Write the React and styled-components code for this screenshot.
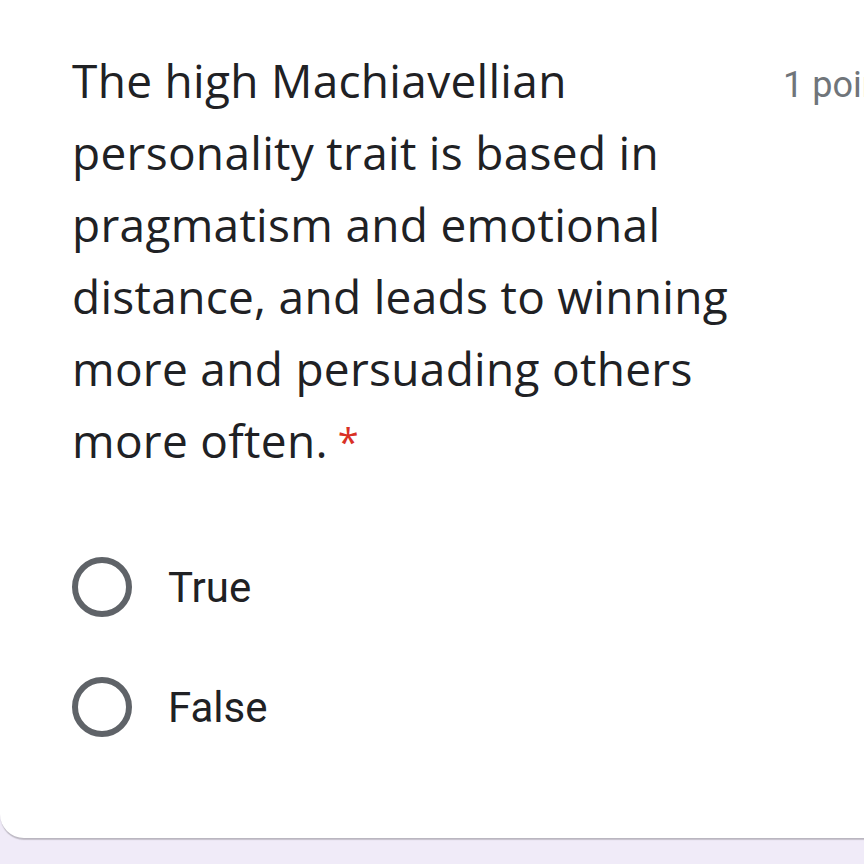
import styled, { createGlobalStyle } from 'styled-components'

const GlobalStyle = createGlobalStyle`
    html, body {
        margin: 0;
        padding: 0;
        background-color: #f0ebf8;
        overflow: hidden;
    }
`

const Page = styled.div`
    width: 864px;
    height: 864px;
    overflow: hidden;
`

const Card = styled.section`
    width: 1100px;
    margin-top: -40px;
    background-color: #ffffff;
    border-radius: 0 0 24px 24px;
    box-shadow: 0 3px 1px -1px rgba(0, 0, 0, 0.16), 0 1px 2px rgba(0, 0, 0, 0.1);
    padding: 84px 0 101px 72px;
    box-sizing: border-box;
`

const Header = styled.div`
    display: flex;
    align-items: flex-start;
`

const Title = styled.h2`
    width: 700px;
    margin: 0;
    font-family: 'Open Sans', 'Lato', sans-serif;
    font-weight: 400;
    font-size: 46px;
    line-height: 72px;
    letter-spacing: 0.3px;
    color: #202124;
`

const Required = styled.span`
    color: #d93025;
    padding-left: 10px;
    font-size: 38px;
    vertical-align: 2px;
`

const Points = styled.div`
    margin-left: 11px;
    padding-top: 5px;
    font-family: Roboto, sans-serif;
    font-size: 36px;
    line-height: 72px;
    color: #70757a;
    white-space: nowrap;
`

const Options = styled.div`
    display: flex;
    flex-direction: column;
    gap: 60px;
    margin-top: 80px;
`

const Option = styled.label`
    display: flex;
    align-items: center;
    gap: 36px;
    font-family: Roboto, sans-serif;
    font-size: 42px;
    color: #202124;
`

const Radio = styled.span`
    width: 60px;
    height: 60px;
    border: 6px solid #5f6368;
    border-radius: 50%;
    box-sizing: border-box;
    flex: none;
`

export default function App() {
    const choices = ['True', 'False']
    return (
        <Page>
            <GlobalStyle />
            <Card>
                <Header>
                    <Title>
                        The high Machiavellian personality trait is based in
                        pragmatism and emotional distance, and leads to winning
                        more and persuading others more often.
                        <Required>*</Required>
                    </Title>
                    <Points>1 point</Points>
                </Header>
                <Options>
                    {choices.map((choice) => (
                        <Option key={choice}>
                            <Radio />
                            {choice}
                        </Option>
                    ))}
                </Options>
            </Card>
        </Page>
    )
}
